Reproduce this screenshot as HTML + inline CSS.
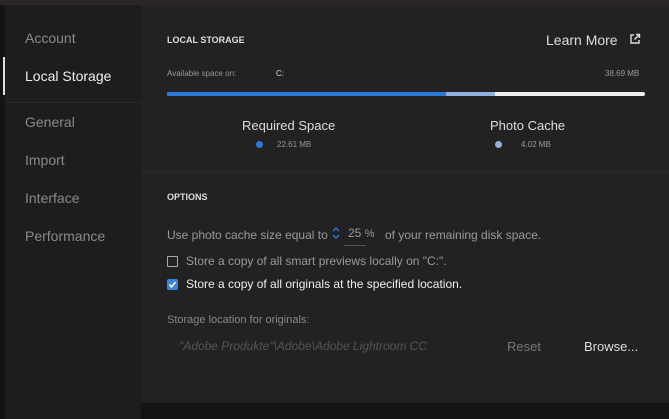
<!DOCTYPE html><html><head><style>
body{margin:0;width:669px;height:419px;background:#141414;font-family:"Liberation Sans",sans-serif;position:relative;overflow:hidden}
.a{position:absolute;white-space:nowrap}
#side{position:absolute;left:5px;top:5px;width:136px;height:414px;background:#1d1d1d}
#main{position:absolute;left:141px;top:5px;width:528px;height:398px;background:#222}
.nav{left:25px;font-size:14px;color:#8a8a8a}
.sm{font-size:8px;color:#999}
.t{font-size:12px;color:#9a9a9a}
</style></head><body>
<div class="a" style="left:0;top:0;width:669px;height:5px;background:#2a2626"></div>
<div id="side"></div><div id="main"></div>
<div class="a" style="left:5px;top:102px;width:136px;height:1px;background:#2a2a2a"></div>
<div class="a" style="left:3px;top:57px;width:2px;height:38px;background:#ddd"></div>
<div class="a nav" style="top:30px">Account</div>
<div class="a nav" style="top:68px;color:#eee">Local Storage</div>
<div class="a nav" style="top:114px">General</div>
<div class="a nav" style="top:152px">Import</div>
<div class="a nav" style="top:190px">Interface</div>
<div class="a nav" style="top:228px">Performance</div>
<div class="a" style="left:167px;top:35px;font-size:9px;font-weight:bold;color:#ddd">LOCAL STORAGE</div>
<div class="a" style="left:546px;top:32px;font-size:14px;color:#ddd">Learn More</div>
<svg class="a" style="left:629px;top:33px" width="12" height="12" viewBox="0 0 12 12"><path d="M5 2H2v8h8V7M7 1.5h3.5V5M10.5 1.5L5.5 6.5" stroke="#ddd" stroke-width="1.4" fill="none"/></svg>
<div class="a sm" style="left:167px;top:69px">Available space on:</div>
<div class="a sm" style="left:276px;top:69px;color:#ddd">C:</div>
<div class="a sm" style="left:605px;top:69px">38.69 MB</div>
<div class="a" style="left:167px;top:92px;width:478px;height:4px;background:#f0f0f0;border-radius:2px"></div>
<div class="a" style="left:167px;top:92px;width:328px;height:4px;background:#8fb3dc;border-radius:2px 0 0 2px"></div>
<div class="a" style="left:167px;top:92px;width:279px;height:4px;background:#2a79d8;border-radius:2px 0 0 2px"></div>
<div class="a" style="left:242px;top:118px;font-size:13px;color:#ddd">Required Space</div>
<div class="a" style="left:256px;top:141px;width:7px;height:7px;border-radius:50%;background:#2a79d8"></div>
<div class="a sm" style="left:277px;top:140px">22.61 MB</div>
<div class="a" style="left:490px;top:118px;font-size:13px;color:#ddd">Photo Cache</div>
<div class="a" style="left:495px;top:141px;width:7px;height:7px;border-radius:50%;background:#8fb3dc"></div>
<div class="a sm" style="left:521px;top:140px">4.02 MB</div>
<div class="a" style="left:141px;top:171px;width:528px;height:1px;background:#2b2b2b"></div>
<div class="a" style="left:167px;top:192px;font-size:9px;font-weight:bold;color:#ddd">OPTIONS</div>
<div class="a t" style="left:167px;top:228px">Use photo cache size equal to</div>
<svg class="a" style="left:332px;top:226px" width="8" height="14" viewBox="0 0 8 14"><path d="M1 5l3-3 3 3M1 9l3 3 3-3" stroke="#2a79d8" stroke-width="1.5" fill="none"/></svg>
<div class="a t" style="left:348px;top:226px">25 <span style="font-size:11px">%</span></div>
<div class="a" style="left:344px;top:245px;width:22px;height:1px;background:#555"></div>
<div class="a t" style="left:385px;top:228px">of your remaining disk space.</div>
<div class="a" style="left:167px;top:256px;width:9px;height:9px;border:1px solid #aaa;border-radius:1px"></div>
<div class="a t" style="left:186px;top:254px">Store a copy of all smart previews locally on "C:".</div>
<div class="a" style="left:167px;top:279px;width:11px;height:11px;background:#3b84d9;border-radius:2px"></div>
<svg class="a" style="left:167px;top:279px" width="11" height="11"><path d="M2.5 5.5l2 2.5 4-5" stroke="#fff" stroke-width="1.5" fill="none"/></svg>
<div class="a t" style="left:186px;top:277px;color:#eee">Store a copy of all originals at the specified location.</div>
<div class="a t" style="left:167px;top:314px;font-size:11px;color:#888">Storage location for originals:</div>
<div class="a t" style="left:179px;top:339px;color:#555;font-style:italic">"Adobe Produkte"\Adobe\Adobe Lightroom CC</div>
<div class="a" style="left:507px;top:339px;font-size:13px;color:#777">Reset</div>
<div class="a" style="left:584px;top:339px;font-size:13px;color:#ddd">Browse...</div>
</body></html>
